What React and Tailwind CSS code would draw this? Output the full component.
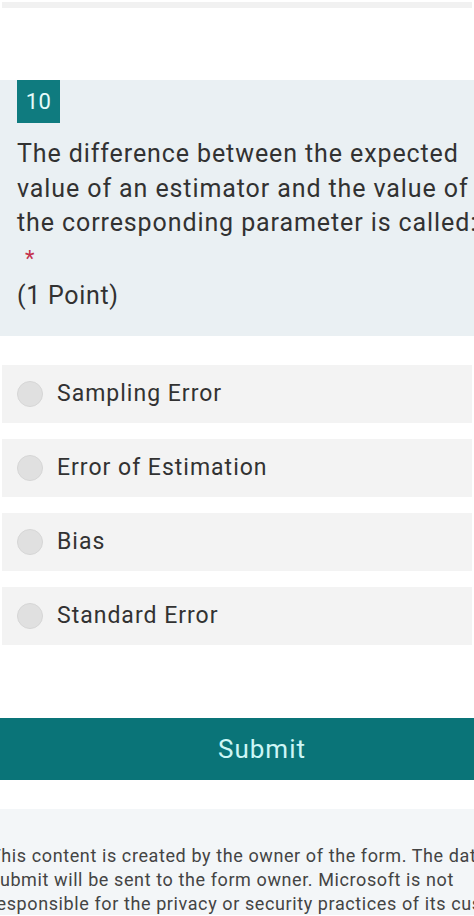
import React from 'react';

const options = ['Sampling Error', 'Error of Estimation', 'Bias', 'Standard Error'];

const App = () => {
  return (
    <div className="min-h-[916px] w-[474px] overflow-hidden bg-white text-[#323232]" style={{ fontFamily: 'Roboto, "Noto Sans", sans-serif' }}>
      <div className="mx-[2px] mt-[2px] h-[6px] bg-[#f1f1f1]" />

      {/* question */}
      <div className="mt-[72px] h-[256px] bg-[#eaf0f3] px-[17px]">
        <div className="flex h-[43px] w-[43px] items-center justify-center bg-[#0f7b7f] text-[22px] tracking-[0.5px] text-[#e6fbfb]">10</div>
        <p className="mt-[14px] text-[25px] leading-[34.5px] tracking-[0.9px] whitespace-nowrap">
          The difference between the expected<br />
          value of an estimator and the value of<br />
          the corresponding parameter is called:
        </p>
        <div className="ml-[8px] h-[30px] text-[22px] leading-[36px] text-[#c4314b]">*</div>
        <p className="mt-[8px] text-[25px] leading-[34px] tracking-[0.7px]">(1 Point)</p>
      </div>

      {/* options */}
      <div className="mx-[2px] mt-[29px] flex flex-col gap-[16px]">
        {options.map((o) => (
          <label key={o} className="flex h-[58px] items-center bg-[#f3f3f3] pl-[15px]">
            <span className="h-[26px] w-[26px] rounded-full border border-[#d6d6d6] bg-[#e0e0e0]" />
            <span className="ml-[14px] text-[23px] tracking-[1px]">{o}</span>
          </label>
        ))}
      </div>

      <button className="mt-[73px] flex h-[62px] w-full items-center justify-center bg-[#0a7478] pl-[50px] text-[26px] tracking-[1px] text-[#cdf6f6]">
        Submit
      </button>

      {/* footer */}
      <div className="mt-[29px] h-[106px] bg-[#f3f6f8] pt-[35px]">
        <p className="ml-[-10px] text-[18px] leading-[24px] tracking-[0.6px] whitespace-nowrap text-[#444]">
          This content is created by the owner of the form. The data you<br />
          submit will be sent to the form owner. Microsoft is not<br />
          responsible for the privacy or security practices of its customers,
        </p>
      </div>
    </div>
  );
};

export default App;
